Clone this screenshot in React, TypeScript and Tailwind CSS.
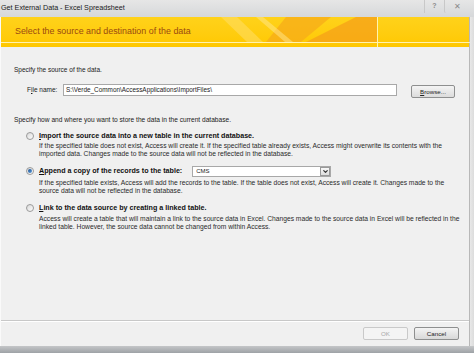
import { ChevronDown } from "lucide-react";

const FONT = { fontFamily: '"Liberation Sans", Arial, sans-serif' };

function Radio({ checked }: { checked?: boolean }) {
  return (
    <span className="relative flex h-[8px] w-[8px] shrink-0 items-center justify-center rounded-full border border-[#9a9a9a] bg-gradient-to-br from-[#d8d8d8] to-[#ffffff]">
      {checked && <span className="h-[4px] w-[4px] rounded-full bg-gradient-to-br from-[#1a4f8f] to-[#5fa0e0]" />}
    </span>
  );
}

function Option({
  checked,
  first,
  rest,
  lines,
  tall,
  children,
}: {
  checked?: boolean;
  first: string;
  rest: string;
  lines: string[];
  tall?: boolean;
  children?: React.ReactNode;
}) {
  return (
    <div>
      <div className={`flex items-center ${tall ? "h-[13px]" : "h-[11px]"}`}>
        <div className="flex w-[38px] justify-end pr-[5px]">
          <Radio checked={checked} />
        </div>
        <span className="text-[7.15px] font-bold leading-[8px] text-[#111]">
          <span className="underline">{first}</span>
          {rest}
        </span>
        {children}
      </div>
      <div className="mt-[1px] pl-[38px] text-[6.7px] leading-[8.4px] text-[#2a2a2a]">
        {lines.map((l) => (
          <div key={l} className="whitespace-nowrap">{l}</div>
        ))}
      </div>
    </div>
  );
}

export default function App() {
  return (
    <div style={FONT} className="flex h-[353px] w-[474px] flex-col overflow-hidden bg-[#f0f0f0]">
      {/* title bar */}
      <div className="flex h-[17px] items-center bg-gradient-to-b from-[#e6e6e6] to-[#d6d8da]">
        <span className="pl-[1px] text-[7.2px] text-[#1a1a1a]">Get External Data - Excel Spreadsheet</span>
        <div className="ml-auto flex h-full items-start pr-[4px]">
          <div className="flex h-[13px] w-[20px] items-center justify-center border-l border-[#c8c8c8] text-[7px] font-bold text-[#8a8a8a]">?</div>
          <div className="flex h-[13px] w-[26px] items-center justify-center rounded-bl-[2px] border-l border-[#c8c8c8] text-[8px] text-[#8a8a8a]">✕</div>
        </div>
      </div>

      <div className="flex flex-1">
        <div className="flex w-[469px] flex-col border-l border-[#fafafa]">
          {/* banner */}
          <div className="relative flex h-[30px] items-center bg-gradient-to-b from-[#ffd21a] to-[#ffc800]">
            <svg className="absolute left-0 top-0" width="469" height="30" viewBox="0 0 469 30">
              <polygon points="285,0 330,0 300,25 265,25" fill="#f7a91a" opacity="0.7" />
              <polygon points="305,25 355,0 376,0 376,25" fill="#f5a01a" opacity="0.75" />
              <polygon points="220,0 236,0 262,25 246,25" fill="#ffe070" opacity="0.5" />
              <polygon points="255,0 262,0 292,25 284,25" fill="#ffe890" opacity="0.5" />
              <line x1="0" y1="25.5" x2="469" y2="25.5" stroke="#fff3b0" strokeWidth="1" />
              <line x1="376.5" y1="0" x2="376.5" y2="30" stroke="#fff3b0" strokeWidth="1" />
            </svg>
            <span className="relative pl-[14px] text-[8.9px] text-[#9a4a10]">Select the source and destination of the data</span>
          </div>

          <div className="flex flex-1 flex-col">
            <div className="mt-[19px] pl-[13px] text-[6.5px] leading-[8px] text-[#1a1a1a]">Specify the source of the data.</div>

            <div className="mt-[10px] flex items-start">
              <span className="w-[62px] pl-[26px] pt-[2px] text-[6.5px] leading-[8px] text-[#1a1a1a]">
                F<span className="underline">i</span>le name:
              </span>
              <div className="flex h-[12px] w-[334px] items-center border border-[#a8a8a8] bg-white pl-[2px] text-[6.4px] text-[#222]">
                S:\Verde_Common\AccessApplications\ImportFiles\
              </div>
              <div className="ml-[14px] mt-[1px] flex h-[13px] w-[44px] items-center justify-center rounded-[2px] border border-[#8e8f8f] bg-gradient-to-b from-[#f4f4f4] to-[#dcdcdc] text-[6.2px] text-[#222]">
                <span className="underline">B</span>rowse...
              </div>
            </div>

            <div className="mt-[18px] pl-[13px] text-[6.6px] leading-[8px] text-[#1a1a1a]">
              Specify how and where you want to store the data in the current database.
            </div>

            <div className="mt-[6px]">
              <Option
                first="I"
                rest="mport the source data into a new table in the current database."
                lines={[
                  "If the specified table does not exist, Access will create it. If the specified table already exists, Access might overwrite its contents with the",
                  "imported data. Changes made to the source data will not be reflected in the database.",
                ]}
              />
            </div>

            <div className="mt-[6px]">
              <Option
                checked
                tall
                first="A"
                rest="ppend a copy of the records to the table:"
                lines={[
                  "If the specified table exists, Access will add the records to the table. If the table does not exist, Access will create it. Changes made to the",
                  "source data will not be reflected in the database.",
                ]}
              >
                <div className="ml-[10px] flex h-[11px] w-[139px] items-center border border-[#a8a8a8] bg-white">
                  <span className="flex-1 pl-[3px] text-[6px] text-[#222]">CMS</span>
                  <span className="flex h-[9px] w-[10px] items-center justify-center border border-[#9a9a9a] bg-gradient-to-b from-[#f8f8f8] to-[#dedede]">
                    <ChevronDown className="h-[7px] w-[7px] text-[#333]" strokeWidth={4} />
                  </span>
                </div>
              </Option>
            </div>

            <div className="mt-[7px]">
              <Option
                first="L"
                rest="ink to the data source by creating a linked table."
                lines={[
                  "Access will create a table that will maintain a link to the source data in Excel. Changes made to the source data in Excel will be reflected in the",
                  "linked table. However, the source data cannot be changed from within Access.",
                ]}
              />
            </div>

            <div className="mt-auto border-t border-[#c8c8c8] shadow-[inset_0_1px_0_#ffffff]">
              <div className="flex h-[25px] items-start justify-end gap-[6px] pr-[10px] pt-[6px]">
                <div className="flex h-[13px] w-[45px] items-center justify-center rounded-[2px] border border-[#c9c9c9] bg-[#f4f4f4] text-[6.2px] text-[#a8a8a8]">
                  OK
                </div>
                <div className="flex h-[13px] w-[45px] items-center justify-center rounded-[2px] border border-[#8e8f8f] bg-gradient-to-b from-[#f4f4f4] to-[#d8d8d8] text-[6.2px] text-[#222]">
                  Cancel
                </div>
              </div>
            </div>
          </div>
        </div>
        <div className="w-[5px] border-l border-[#b8b8b8] bg-gradient-to-r from-[#e8e8e8] to-[#dcdcdc]" />
      </div>

      <div className="h-[7px] bg-gradient-to-b from-[#c4c6c8] to-[#9ea2a6]" />
    </div>
  );
}
